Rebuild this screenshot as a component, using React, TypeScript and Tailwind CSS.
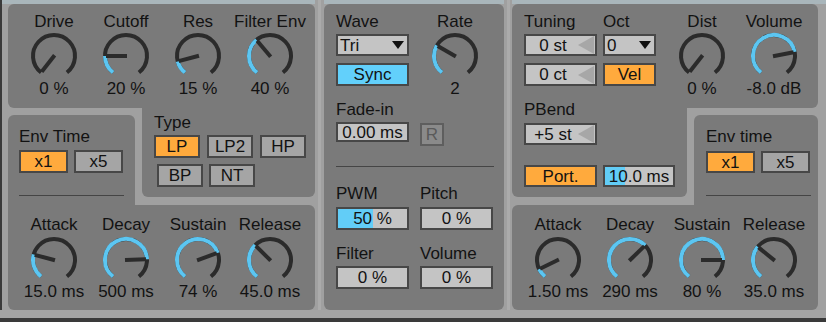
import React from "react";

const DARK = "#2b2b2b";
const CYAN = "#5cc6f2";

function Knob({ angle }: { angle: number }) {
  const c = 24;
  const r = 21;
  const s = -142;
  const e = 142;
  const p = (a: number, rad: number) => {
    const t = (a * Math.PI) / 180;
    return [c + rad * Math.sin(t), c - rad * Math.cos(t)];
  };
  const arc = (a0: number, a1: number) => {
    const [x0, y0] = p(a0, r);
    const [x1, y1] = p(a1, r);
    const large = a1 - a0 > 180 ? 1 : 0;
    return `M ${x0} ${y0} A ${r} ${r} 0 ${large} 1 ${x1} ${y1}`;
  };
  const [lx0, ly0] = p(angle, -1);
  const [lx1, ly1] = p(angle, 20);
  return (
    <svg width="48" height="48" viewBox="0 0 48 48">
      <path d={arc(s, e)} fill="none" stroke={DARK} strokeWidth="4" />
      {angle > s + 1 && <path d={arc(s, angle)} fill="none" stroke={CYAN} strokeWidth="4" />}
      <line x1={lx0} y1={ly0} x2={lx1} y2={ly1} stroke={DARK} strokeWidth="4" />
    </svg>
  );
}

function KnobCol({ label, value, angle, bottom }: { label: string; value: string; angle: number; bottom?: boolean }) {
  return (
    <div className="flex flex-col items-center">
      <div className="h-[20px] leading-[20px] whitespace-nowrap">{label}</div>
      <div className={bottom ? "mt-[1px]" : ""}>
        <Knob angle={angle} />
      </div>
      <div className={bottom ? "h-[20px] leading-[20px] whitespace-nowrap -mt-[2px]" : "h-[20px] leading-[20px] whitespace-nowrap -mt-[1px]"}>
        {value}
      </div>
    </div>
  );
}

function Btn({ children, className }: { children: React.ReactNode; className: string }) {
  return (
    <div className={"flex items-center justify-center border-2 border-[#474747] leading-none " + className}>
      {children}
    </div>
  );
}

function Dropdown({ text, className }: { text: string; className: string }) {
  return (
    <div className={"flex items-center justify-between border-2 border-[#474747] bg-[#c4c4c4] pl-[2px] pr-[3px] leading-none " + className}>
      <span>{text}</span>
      <svg width="12" height="8" viewBox="0 0 12 8">
        <polygon points="0,0 12,0 6,8" fill="#111" />
      </svg>
    </div>
  );
}

function NumField({ text, className }: { text: string; className: string }) {
  return (
    <div className={"flex items-center border-2 border-[#474747] bg-[#c4c4c4] leading-none " + className}>
      <span className="flex-1 text-center pl-[2px]">{text}</span>
      <svg width="16" height="18" viewBox="0 0 16 18" className="mr-[1px]">
        <polygon points="16,0 16,18 0,9" fill="#a7a7a7" />
      </svg>
    </div>
  );
}

const Strip = () => <div className="h-[4px] bg-[#a9b6bb]" />;

const Sep = () => (
  <div className="w-[9px] flex justify-center">
    <div className="w-[3px] bg-[#ababab]" />
  </div>
);

const Sep8 = () => (
  <div className="w-[8px] flex justify-center">
    <div className="w-[3px] bg-[#ababab]" />
  </div>
);

export default function App() {
  return (
    <div className="w-[826px] h-[322px] flex flex-col bg-[#a0a0a0] text-[#121212] text-[17px] font-['Liberation_Sans',Arial,sans-serif] overflow-hidden">
      <div className="h-[310px] flex">
        <div className="w-[2px] bg-[#3a3a3a]" />
        <div className="w-[6px] flex flex-col">
          <Strip />
        </div>

        {/* Section 1 */}
        <div className="w-[307px] flex flex-col">
          <Strip />
          <div className="h-[104px] bg-[#7a7a7a] rounded-t-[6px] rounded-bl-[6px] pl-[10px] pt-[8px] grid grid-cols-[repeat(4,72px)] content-start">
            <KnobCol label="Drive" value="0 %" angle={-142} />
            <KnobCol label="Cutoff" value="20 %" angle={-90} />
            <KnobCol label="Res" value="15 %" angle={-105} />
            <KnobCol label="Filter Env" value="40 %" angle={-40} />
          </div>
          <div className="h-[97px] flex">
            <div className="w-[127px] pt-[7px] flex flex-col">
              <div className="flex-1 bg-[#7a7a7a] rounded-t-[6px] pl-[11px] pt-[12px] flex flex-col">
                <div className="h-[20px] leading-[20px]">Env Time</div>
                <div className="mt-[3px] flex gap-[6px]">
                  <Btn className="w-[49px] h-[23px] bg-[#ffaa3d]">x1</Btn>
                  <Btn className="w-[49px] h-[23px] bg-[#a5a5a5]">x5</Btn>
                </div>
                <div className="mt-[22px] w-[105px] h-px bg-[#454545]" />
              </div>
            </div>
            <div className="w-[7px]" />
            <div className="flex-1 flex flex-col">
              <div className="h-[89px] bg-[#7a7a7a] rounded-b-[6px] pl-[12px] pt-[5px] flex flex-col">
                <div className="h-[20px] leading-[20px]">Type</div>
                <div className="mt-[2px] flex gap-[7px]">
                  <Btn className="w-[46px] h-[23px] bg-[#ffaa3d]">LP</Btn>
                  <Btn className="w-[46px] h-[23px] bg-[#a5a5a5]">LP2</Btn>
                  <Btn className="w-[46px] h-[23px] bg-[#a5a5a5]">HP</Btn>
                </div>
                <div className="mt-[6px] ml-[3px] flex gap-[6px]">
                  <Btn className="w-[46px] h-[23px] bg-[#a5a5a5]">BP</Btn>
                  <Btn className="w-[46px] h-[23px] bg-[#a5a5a5]">NT</Btn>
                </div>
              </div>
            </div>
          </div>
          <div className="h-[105px] bg-[#7a7a7a] rounded-b-[6px] rounded-tr-[6px] pl-[10px] pt-[10px] grid grid-cols-[repeat(4,72px)] content-start">
            <KnobCol label="Attack" value="15.0 ms" angle={-75} bottom />
            <KnobCol label="Decay" value="500 ms" angle={88} bottom />
            <KnobCol label="Sustain" value="74 %" angle={70} bottom />
            <KnobCol label="Release" value="45.0 ms" angle={-45} bottom />
          </div>
        </div>

        <Sep />

        {/* Section 2 */}
        <div className="w-[180px] flex flex-col">
          <Strip />
          <div className="h-[306px] bg-[#7a7a7a] rounded-[6px] pl-[12px] pt-[8px] flex flex-col">
            <div className="flex">
              <div className="w-[73px] flex flex-col">
                <div className="h-[20px] leading-[20px]">Wave</div>
                <Dropdown text="Tri" className="mt-[2px] h-[22px]" />
                <Btn className="mt-[7px] h-[23px] bg-[#62d0fb]">Sync</Btn>
              </div>
              <div className="ml-[10px] w-[72px]">
                <KnobCol label="Rate" value="2" angle={-60} />
              </div>
            </div>
            <div className="mt-[1px] h-[20px] leading-[20px]">Fade-in</div>
            <div className="mt-[2px] flex items-start">
              <div className="w-[73px] h-[20px] border-2 border-[#474747] bg-[#c4c4c4] flex items-center justify-center leading-none">
                0.00 ms
              </div>
              <div className="ml-[11px] mt-[1px] w-[24px] h-[23px] border-2 border-[#5e5e5e] bg-[#8a8a8a] text-[#5a5a5a] flex items-center justify-center leading-none">
                R
              </div>
            </div>
            <div className="mt-[20px] w-[158px] h-px bg-[#454545]" />
            <div className="flex gap-[11px]">
              <div className="w-[73px] flex flex-col">
                <div className="mt-[17px] h-[20px] leading-[20px]">PWM</div>
                <div className="mt-[3px] h-[23px] border-2 border-[#474747] bg-[linear-gradient(to_right,#62cdf7_50%,#c4c4c4_50%)] flex items-center justify-center leading-none">
                  50 %
                </div>
                <div className="mt-[14px] h-[20px] leading-[20px]">Filter</div>
                <div className="mt-[2px] h-[23px] border-2 border-[#474747] bg-[#c4c4c4] flex items-center justify-center leading-none">
                  0 %
                </div>
              </div>
              <div className="w-[73px] flex flex-col">
                <div className="mt-[17px] h-[20px] leading-[20px]">Pitch</div>
                <div className="mt-[3px] h-[23px] border-2 border-[#474747] bg-[#c4c4c4] flex items-center justify-center leading-none">
                  0 %
                </div>
                <div className="mt-[14px] h-[20px] leading-[20px]">Volume</div>
                <div className="mt-[2px] h-[23px] border-2 border-[#474747] bg-[#c4c4c4] flex items-center justify-center leading-none">
                  0 %
                </div>
              </div>
            </div>
          </div>
        </div>

        <Sep8 />

        {/* Section 3 */}
        <div className="w-[306px] flex flex-col">
          <Strip />
          <div className="h-[104px] bg-[#7a7a7a] rounded-t-[6px] rounded-br-[6px] pl-[10px] pt-[8px] grid grid-cols-[repeat(4,72px)] content-start">
            <div className="col-span-2 pl-[2px] flex gap-[6px]">
              <div className="w-[73px] flex flex-col">
                <div className="h-[20px] leading-[20px]">Tuning</div>
                <NumField text="0 st" className="mt-[2px] h-[22px]" />
                <NumField text="0 ct" className="mt-[7px] h-[23px]" />
              </div>
              <div className="w-[53px] flex flex-col">
                <div className="h-[20px] leading-[20px]">Oct</div>
                <Dropdown text="0" className="mt-[2px] h-[22px]" />
                <Btn className="mt-[7px] h-[23px] bg-[#ffaa3d]">Vel</Btn>
              </div>
            </div>
            <KnobCol label="Dist" value="0 %" angle={-142} />
            <KnobCol label="Volume" value="-8.0 dB" angle={79} />
          </div>
          <div className="h-[97px] flex">
            <div className="w-[175px] flex flex-col">
              <div className="h-[89px] bg-[#7a7a7a] rounded-b-[6px] pl-[12px] flex flex-col">
                <div className="-mt-[8px] h-[20px] leading-[20px]">PBend</div>
                <NumField text="+5 st" className="mt-[3px] w-[73px] h-[22px]" />
                <div className="mt-[20px] flex gap-[6px]">
                  <Btn className="w-[73px] h-[22px] bg-[#ffaa3d]">Port.</Btn>
                  <div className="w-[72px] h-[22px] border-2 border-[#474747] bg-[linear-gradient(to_right,#62cdf7_20px,#c4c4c4_20px)] flex items-center justify-center leading-none">
                    10.0 ms
                  </div>
                </div>
              </div>
            </div>
            <div className="w-[7px]" />
            <div className="flex-1 pt-[7px] flex flex-col">
              <div className="flex-1 bg-[#7a7a7a] rounded-t-[6px] pl-[12px] pt-[12px] flex flex-col">
                <div className="h-[20px] leading-[20px]">Env time</div>
                <div className="mt-[4px] flex gap-[6px]">
                  <Btn className="w-[49px] h-[22px] bg-[#ffaa3d]">x1</Btn>
                  <Btn className="w-[49px] h-[22px] bg-[#a5a5a5]">x5</Btn>
                </div>
                <div className="mt-[22px] w-[105px] h-px bg-[#454545]" />
              </div>
            </div>
          </div>
          <div className="h-[105px] bg-[#7a7a7a] rounded-b-[6px] rounded-tl-[6px] pl-[10px] pt-[10px] grid grid-cols-[repeat(4,72px)] content-start">
            <KnobCol label="Attack" value="1.50 ms" angle={-116} bottom />
            <KnobCol label="Decay" value="290 ms" angle={46} bottom />
            <KnobCol label="Sustain" value="80 %" angle={90} bottom />
            <KnobCol label="Release" value="35.0 ms" angle={-51} bottom />
          </div>
        </div>

        <div className="w-[8px] flex flex-col">
          <Strip />
        </div>
      </div>
      <div className="h-[8px] bg-[#a4a4a4]" />
      <div className="h-[4px] bg-[#3a3a3a]" />
    </div>
  );
}
